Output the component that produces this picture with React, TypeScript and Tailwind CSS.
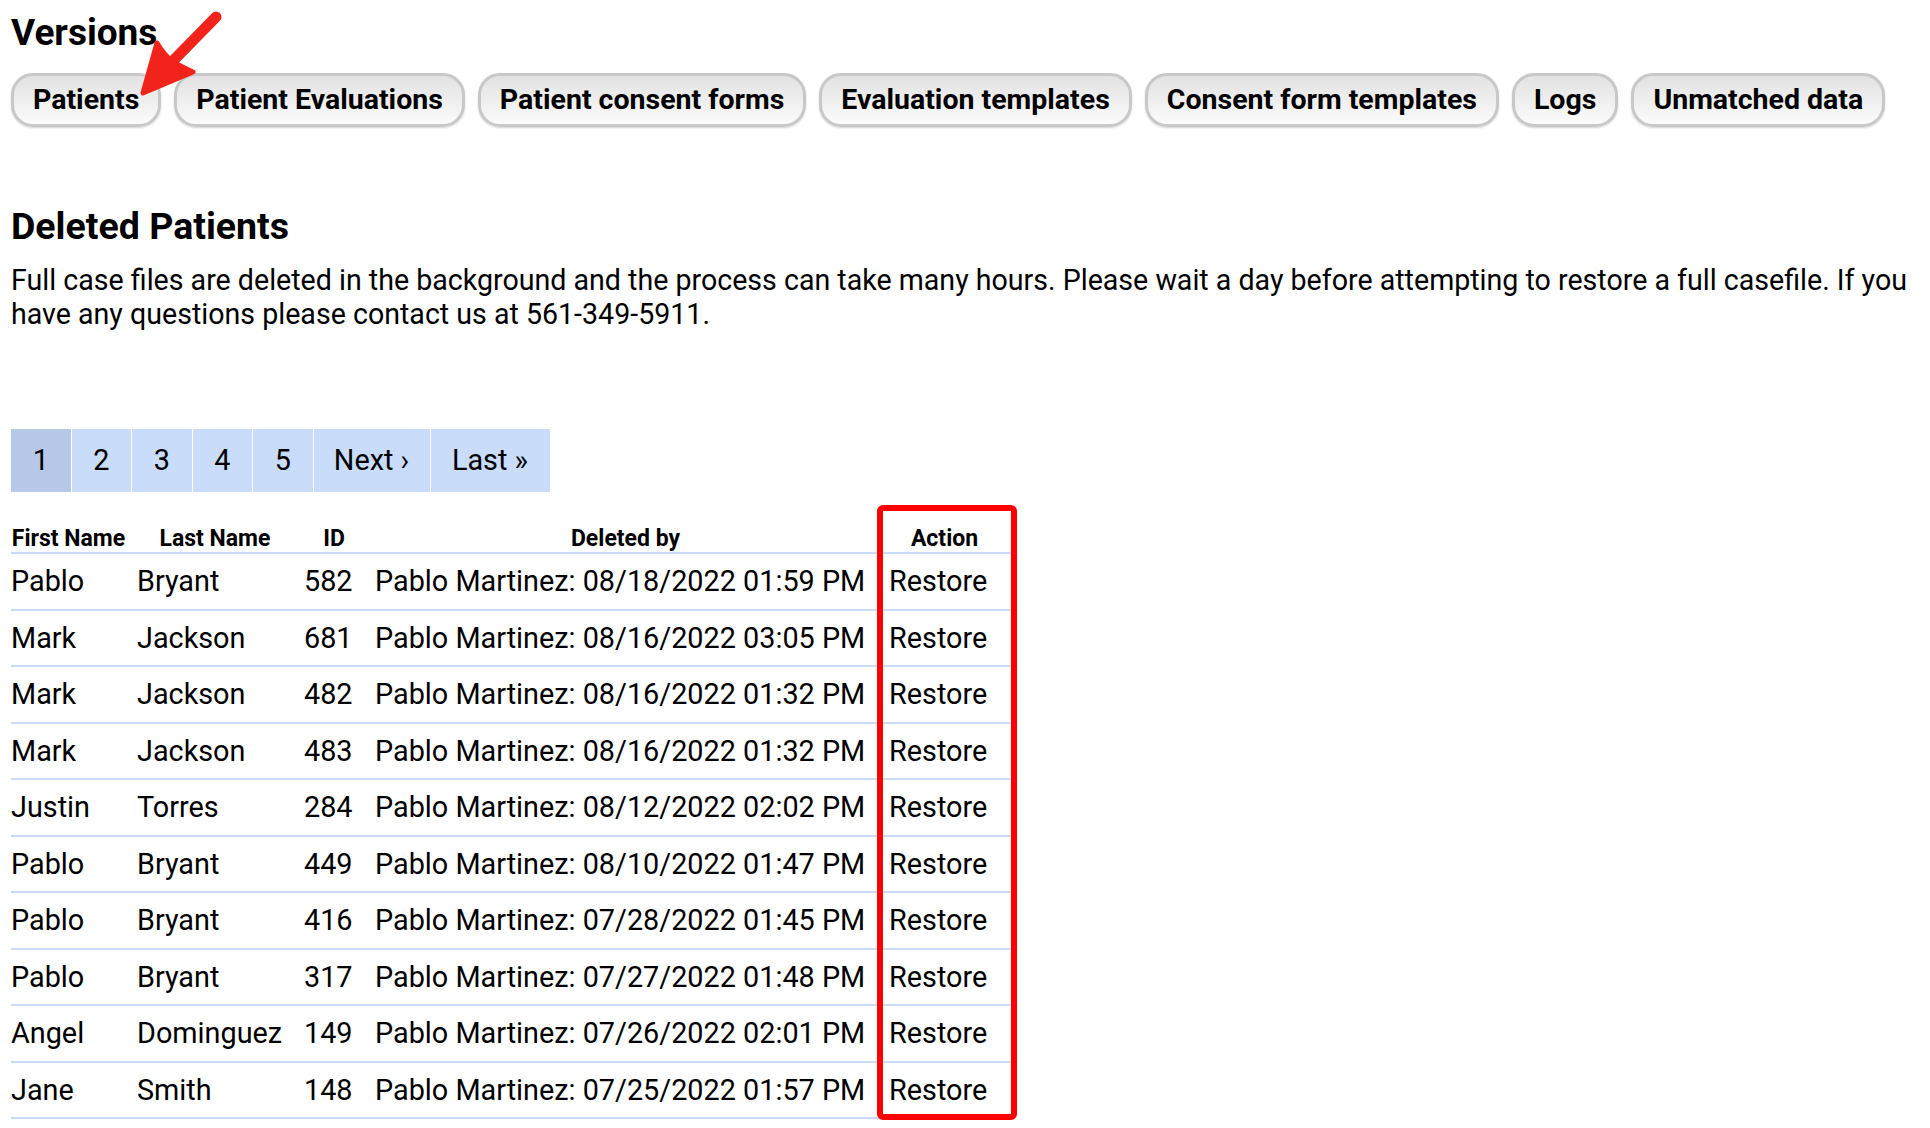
import React from "react";

const tabs = [
  "Patients",
  "Patient Evaluations",
  "Patient consent forms",
  "Evaluation templates",
  "Consent form templates",
  "Logs",
  "Unmatched data",
];

const rows: [string, string, string, string][] = [
  ["Pablo", "Bryant", "582", "Pablo Martinez: 08/18/2022 01:59 PM"],
  ["Mark", "Jackson", "681", "Pablo Martinez: 08/16/2022 03:05 PM"],
  ["Mark", "Jackson", "482", "Pablo Martinez: 08/16/2022 01:32 PM"],
  ["Mark", "Jackson", "483", "Pablo Martinez: 08/16/2022 01:32 PM"],
  ["Justin", "Torres", "284", "Pablo Martinez: 08/12/2022 02:02 PM"],
  ["Pablo", "Bryant", "449", "Pablo Martinez: 08/10/2022 01:47 PM"],
  ["Pablo", "Bryant", "416", "Pablo Martinez: 07/28/2022 01:45 PM"],
  ["Pablo", "Bryant", "317", "Pablo Martinez: 07/27/2022 01:48 PM"],
  ["Angel", "Dominguez", "149", "Pablo Martinez: 07/26/2022 02:01 PM"],
  ["Jane", "Smith", "148", "Pablo Martinez: 07/25/2022 01:57 PM"],
];

const pages = ["1", "2", "3", "4", "5"];

export default function App() {
  return (
    <div className="relative min-h-screen bg-white pl-[11px] pr-[2px] pt-[11px] font-['Roboto',sans-serif] text-black">
      <h1 className="text-[37px] font-bold leading-[43px]">Versions</h1>

      <div className="mt-[19px] flex gap-[13px]">
        {tabs.map((t) => (
          <div
            key={t}
            className="flex h-[54px] items-center rounded-[22px] border-[3px] border-[#c8c8c8] bg-gradient-to-b from-[#e2e2e2] to-[#fbfbfb] px-[19px] text-[28.5px] font-bold leading-none shadow-[0_1px_2px_rgba(0,0,0,0.18)]"
          >
            {t}
          </div>
        ))}
      </div>

      <h2 className="mt-[79px] text-[37.5px] font-bold leading-[41px]">Deleted Patients</h2>
      <p className="mt-[16px] text-[28.6px] leading-[34px]">
        Full case files are deleted in the background and the process can take many hours. Please wait a day before
        attempting to restore a full casefile. If you have any questions please contact us at 561-349-5911.
      </p>

      <div className="mt-[98px] flex gap-px">
        {pages.map((p, i) => (
          <div
            key={p}
            className={`flex h-[63px] w-[59.5px] items-center justify-center text-[28.8px] ${
              i === 0 ? "bg-[#b7c7e8]" : "bg-[#c9ddfb]"
            }`}
          >
            {p}
          </div>
        ))}
        <div className="flex h-[63px] w-[116px] items-center justify-center bg-[#c9ddfb] text-[28.8px]">Next ›</div>
        <div className="flex h-[63px] w-[119px] items-center justify-center bg-[#c9ddfb] text-[28.8px]">Last »</div>
      </div>

      <div className="relative pt-[34px]">
        <table className="table-fixed border-collapse">
          <colgroup>
            <col className="w-[115px]" />
            <col className="w-[169px]" />
            <col className="w-[69px]" />
            <col className="w-[513px]" />
            <col className="w-[135px]" />
          </colgroup>
          <thead>
            <tr className="border-b-2 border-[#c9dbf5]">
              <th className="pb-px text-center text-[23px] font-bold leading-[25px] whitespace-nowrap">First Name</th>
              <th className="pb-px pl-[9px] text-center text-[23px] font-bold leading-[25px] whitespace-nowrap">Last Name</th>
              <th className="pb-px pl-[9px] text-center text-[23px] font-bold leading-[25px] whitespace-nowrap">ID</th>
              <th className="pb-px pl-[10px] text-center text-[23px] font-bold leading-[25px] whitespace-nowrap">Deleted by</th>
              <th className="pb-px text-center text-[23px] font-bold leading-[25px] whitespace-nowrap">Action</th>
            </tr>
          </thead>
          <tbody>
            {rows.map((r, i) => (
              <tr key={i} className="border-b-2 border-[#c9dbf5]">
                <td className="py-[10px] pl-0 text-[28.8px] leading-[34.5px] whitespace-nowrap">{r[0]}</td>
                <td className="py-[10px] pl-[11px] text-[28.8px] leading-[34.5px] whitespace-nowrap">{r[1]}</td>
                <td className="py-[10px] pl-[9px] text-[28.8px] leading-[34.5px] whitespace-nowrap">{r[2]}</td>
                <td className="py-[10px] pl-[11px] text-[28.8px] leading-[34.5px] whitespace-nowrap">{r[3]}</td>
                <td className="py-[10px] pl-[12px] text-[28.8px] leading-[34.5px] whitespace-nowrap">Restore</td>
              </tr>
            ))}
          </tbody>
        </table>
        <div className="pointer-events-none absolute left-[866px] top-[13px] h-[615px] w-[140px] rounded-[6px] border-[6px] border-[#ff0000]" />
      </div>

      <svg className="pointer-events-none absolute left-0 top-0" width="240" height="110" viewBox="0 0 240 110">
        <line x1="216" y1="17" x2="164" y2="70" stroke="#f2231a" strokeWidth="11" strokeLinecap="round" />
        <path
          d="M143 93 L157 43 Q164 55 173 62 Q182 67 193 72 Z"
          fill="#f2231a"
          stroke="#f2231a"
          strokeWidth="5"
          strokeLinejoin="round"
        />
      </svg>
    </div>
  );
}
